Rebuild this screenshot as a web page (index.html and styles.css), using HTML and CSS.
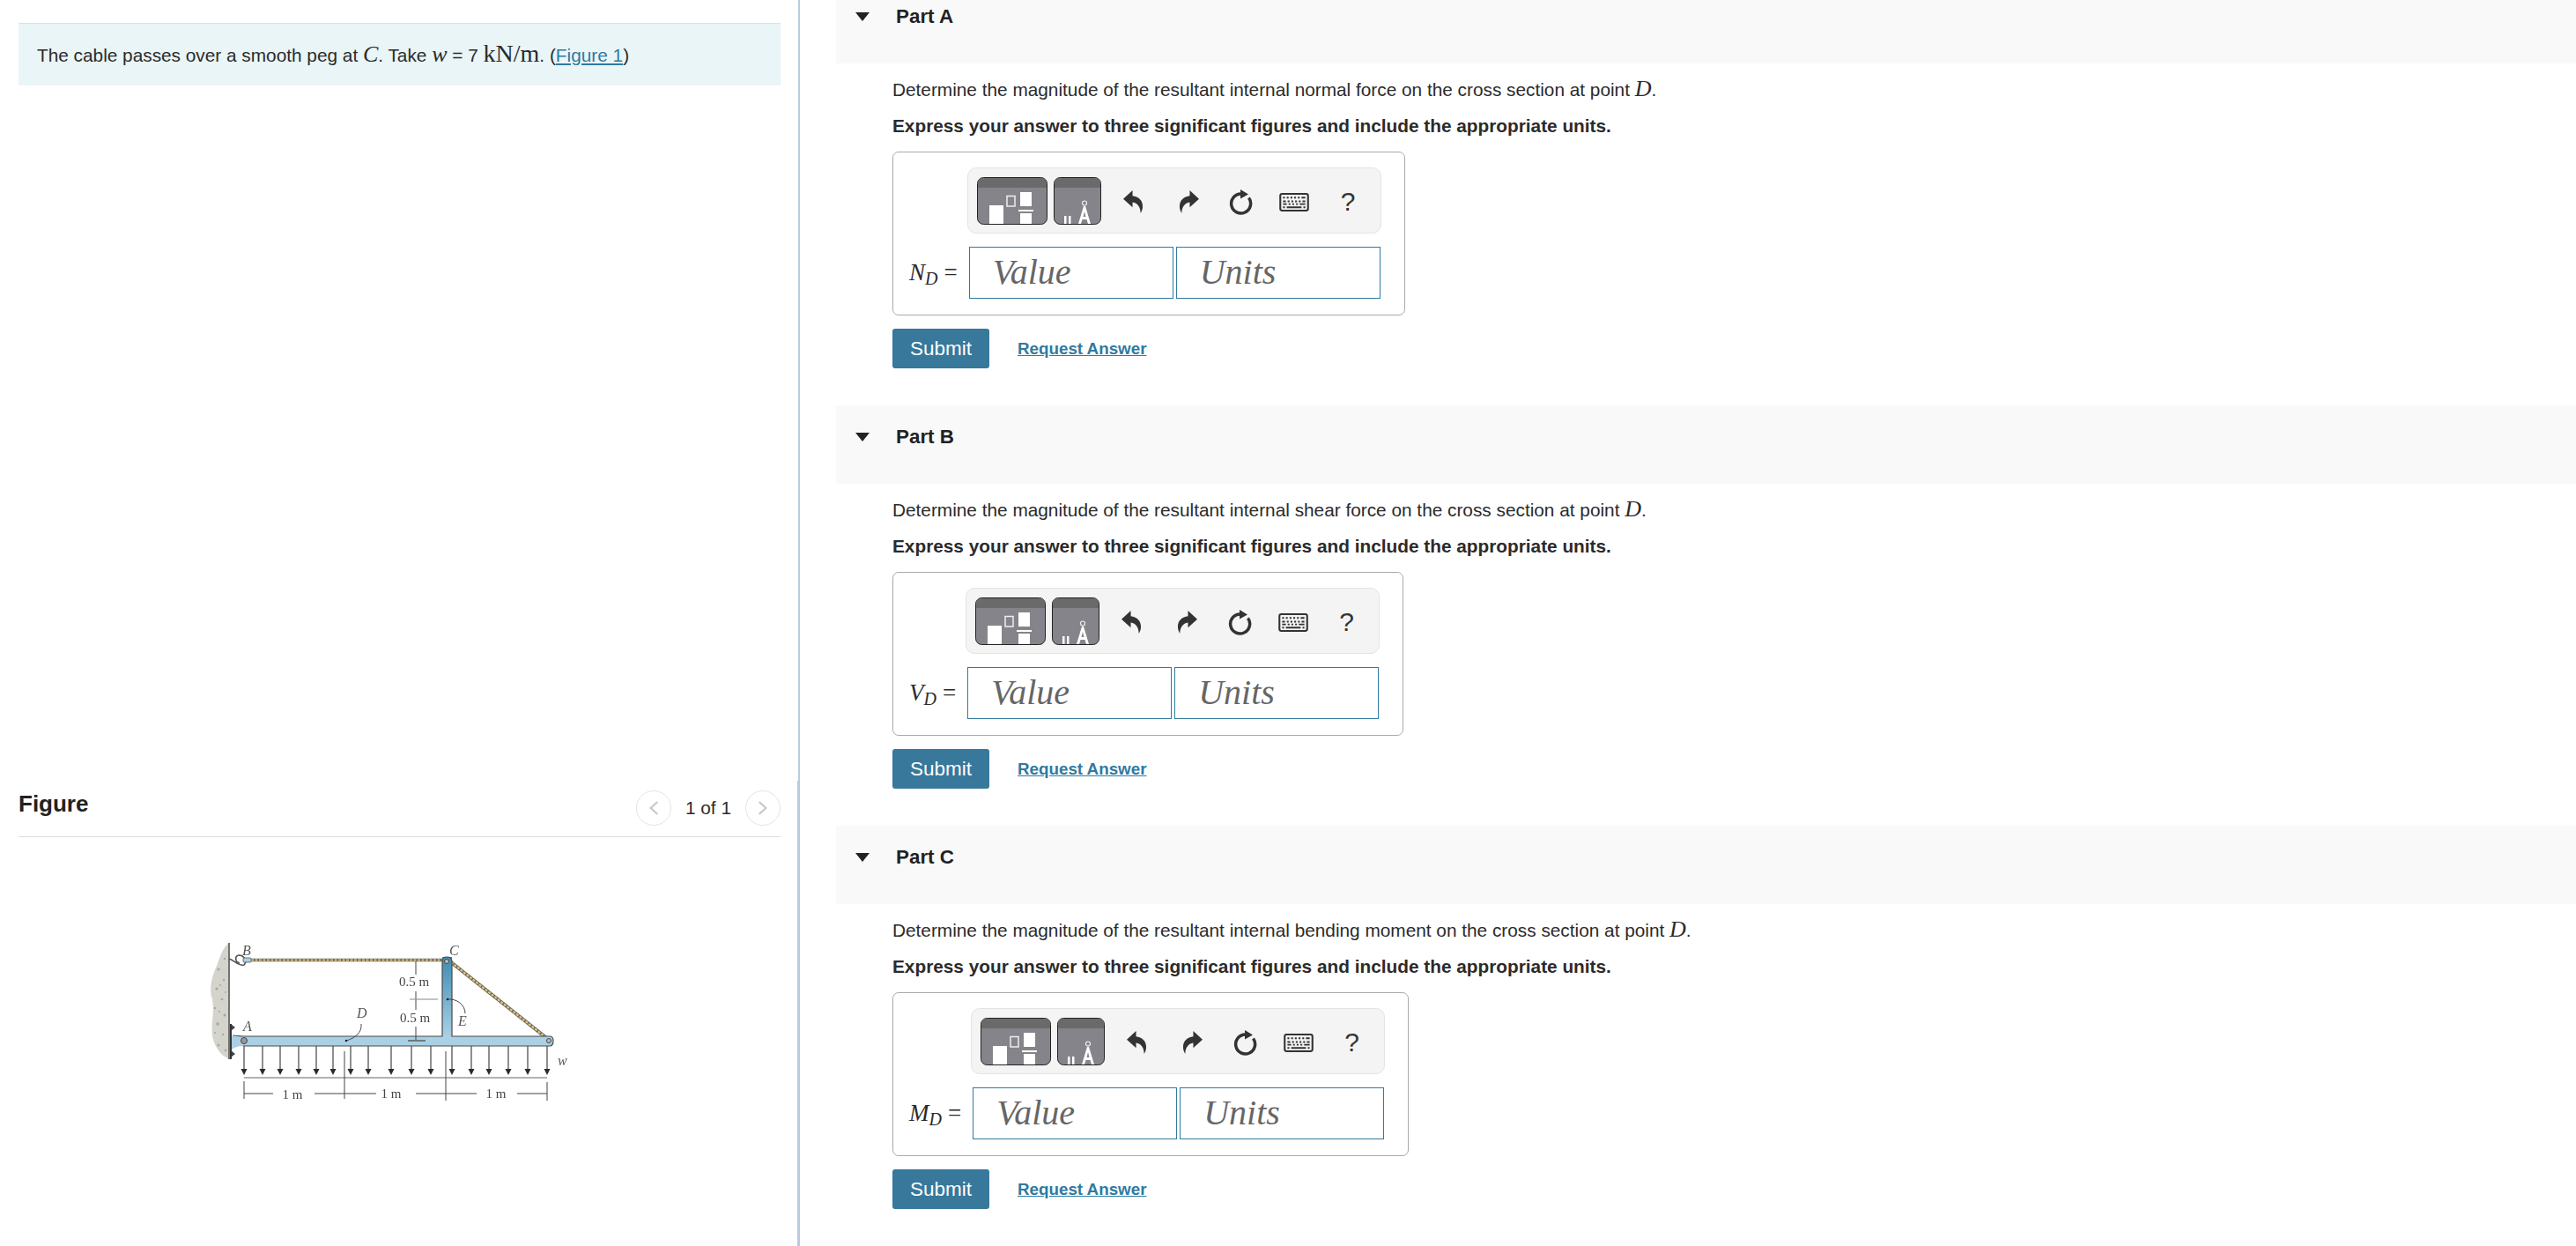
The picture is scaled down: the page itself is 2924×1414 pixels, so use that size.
FILE: index.html
```html
<!DOCTYPE html>
<html lang="en">

<head>
    <meta charset="UTF-8">
    <title>Resultant Internal Loadings</title>
    <link rel="stylesheet" href="styles.css">
</head>

<body>
    <svg class="defs" width="0" height="0">
        <defs>
            <symbol id="ico-undo" viewBox="0 0 24 27">
                <path d="M0 10 L11 0 V6.500 C18 7 23 12 23 19 C23 22 22 25 20.500 27 C20.500 20 17 14.500 11 14 V20 Z" />
            </symbol>
            <symbol id="ico-reload" viewBox="0 0 28 29">
                <path class="ico-line" d="M14.500 5 A11 11 0 1 0 23.500 9.500" />
                <path d="M14 0 L23 5.500 L14 10.500 Z" />
            </symbol>
            <symbol id="ico-keys" viewBox="0 0 32 20">
                <rect class="ico-line-thin" x="1" y="1" width="30" height="18" rx="2" />
                <path class="ico-dots" d="M4 5h2M8 5h2M12 5h2M16 5h2M20 5h2M24 5h4M4 9h3M9 9h2M13 9h2M17 9h2M21 9h2M25 9h3M4 12h4M10 12h2M14 12h2M18 12h2M22 12h6M4 15.500h2M8 15.500h16M26 15.500h2" />
            </symbol>
            <symbol id="btn-templates" viewBox="0 0 80 54">
                <rect class="btn-body" x="0.500" y="0.500" width="79" height="53" rx="7" />
                <path class="btn-top" d="M1 12 V7 Q1 1 7 1 H73 Q79 1 79 7 V12 Z" />
                <path class="btn-white" d="M14 32 H30 V53 H14 Z M49 17 H62 V33 H49 Z M47 37 H64 V39 H47 Z M49 41 H62 V53 H49 Z" />
                <rect class="btn-outline" x="34" y="21.500" width="9" height="11.500" />
            </symbol>
            <symbol id="btn-units" viewBox="0 0 54 54">
                <rect class="btn-body" x="0.500" y="0.500" width="53" height="53" rx="7" />
                <path class="btn-top" d="M1 12 V7 Q1 1 7 1 H47 Q53 1 53 7 V12 Z" />
                <path class="btn-white" d="M12 44 H14.500 V53 H12 Z M17 44 H19.500 V53 H17 Z M34 33 L36 33 L42 53 H39 L37.500 48 H32.500 L31 53 H28 Z M33.500 45 H36.500 L35 39 Z" />
                <circle class="btn-ring" cx="35" cy="29.500" r="2.500" />
            </symbol>
        </defs>
    </svg>

    <div class="layout">
        <div class="left-pane">
            <div class="intro">
                The cable passes over a smooth peg at <span class="math">C</span>. Take <span class="math">w</span> = 7
                <span class="math-roman">kN/m</span>. (<a href="#fig">Figure 1</a>)
            </div>

            <div class="figure-head" id="fig">
                <h2>Figure</h2>
                <div class="pager">
                    <span class="pager-btn"><svg viewBox="0 0 14 20" width="12" height="18"><path d="M12 2 L3 10 L12 18" /></svg></span>
                    <span class="pager-text">1 of 1</span>
                    <span class="pager-btn"><svg viewBox="0 0 14 20" width="12" height="18"><path d="M2 2 L11 10 L2 18" /></svg></span>
                </div>
            </div>

            <svg class="diagram" viewBox="0 0 480 220" width="480" height="220">
                <defs>
                    <linearGradient id="post" x1="0" y1="0" x2="0" y2="1">
                        <stop offset="0" stop-color="#3d8db4" />
                        <stop offset="1" stop-color="#a9d0e4" />
                    </linearGradient>
                </defs>
                <!-- wall -->
                <path d="M60 20 C52 26 50 36 46 46 C40 60 37 72 41 84 C44 100 38 116 42 130 C46 142 52 148 60 152 Z" fill="#d4d4cd" />
                <g fill="#a4a8a8">
                    <circle cx="48" cy="50" r="1.500" /><circle cx="54" cy="62" r="1.200" /><circle cx="46" cy="72" r="1.600" />
                    <circle cx="52" cy="84" r="1.300" /><circle cx="44" cy="94" r="1.200" /><circle cx="55" cy="102" r="1.500" />
                    <circle cx="47" cy="112" r="1.800" /><circle cx="53" cy="124" r="1.200" /><circle cx="48" cy="136" r="1.500" />
                    <circle cx="55" cy="38" r="1.200" /><circle cx="56" cy="142" r="1.300" /><circle cx="50" cy="68" r="1" />
                    <circle cx="56" cy="76" r="1" /><circle cx="49" cy="98" r="1.100" /><circle cx="44" cy="122" r="1" />
                </g>
                <line x1="60" y1="20" x2="60" y2="152" stroke="#555" stroke-width="1.600" />
                <!-- bolts and bracket -->
                <path d="M62 112 L67 116 L62 120 Z M62 142 L67 146 L62 150 Z" fill="#444" />
                <path d="M61 112 H63 V152 H61 Z" fill="#333" />
                <!-- cables -->
                <line x1="85" y1="39.500" x2="304" y2="39.500" stroke="#6b6656" stroke-width="3.400" />
                <line x1="85" y1="39.500" x2="304" y2="39.500" stroke="#e0c688" stroke-width="1.800" stroke-dasharray="3 1.500" />
                <line x1="312" y1="42" x2="423" y2="130" stroke="#6b6656" stroke-width="4" />
                <line x1="312" y1="42" x2="423" y2="130" stroke="#e0c688" stroke-width="2.200" stroke-dasharray="3 1.500" />
                <!-- hook at B -->
                <path d="M60 38 C66 40 72 47 77 45 C81 41 77 34 71 34 C66 35 67 42 72 43" fill="none" stroke="#555" stroke-width="1.700" />
                <rect x="76" y="37" width="9" height="5" rx="1" fill="#a9d0e4" stroke="#555" stroke-width="0.800" />
                <!-- member -->
                <path d="M63 126 H302 V41 Q302 36 307 36 Q313 36 313 41 V126 H424 Q428 126 428 131 Q428 137 424 137 H76 C70 137 66 139 63 141 Z" fill="#a9d0e4" />
                <path d="M302 36 H313 V126 H302 Z" fill="url(#post)" />
                <path d="M64 125 C68 125 72 126 76 126 H302 V41 Q302 36 307 36 Q313 36 313 41 V126 H424 M76 137 H424 Q428 137 428 131 Q428 126 424 126" fill="none" stroke="#4a4a4a" stroke-width="1.200" />
                <circle cx="77" cy="131" r="3.500" fill="#999" stroke="#444" />
                <circle cx="307" cy="41" r="2.500" fill="#bbb" stroke="#444" />
                <circle cx="423" cy="131" r="2.500" fill="#bbb" stroke="#444" />
                <!-- load arrows -->
                <g stroke="#444" stroke-width="1.200">
                    <line x1="77" y1="137" x2="77" y2="164" /><line x1="98" y1="137" x2="98" y2="164" />
                    <line x1="118" y1="137" x2="118" y2="164" /><line x1="139" y1="137" x2="139" y2="164" />
                    <line x1="159" y1="137" x2="159" y2="164" /><line x1="178" y1="137" x2="178" y2="164" />
                    <line x1="198" y1="137" x2="198" y2="164" /><line x1="218" y1="137" x2="218" y2="164" />
                    <line x1="244" y1="137" x2="244" y2="164" /><line x1="267" y1="137" x2="267" y2="164" />
                    <line x1="289" y1="137" x2="289" y2="164" /><line x1="313" y1="137" x2="313" y2="164" />
                    <line x1="335" y1="137" x2="335" y2="164" /><line x1="355" y1="137" x2="355" y2="164" />
                    <line x1="377" y1="137" x2="377" y2="164" /><line x1="399" y1="137" x2="399" y2="164" />
                    <line x1="421" y1="137" x2="421" y2="164" />
                    <line x1="77" y1="173" x2="421" y2="173" stroke="#666" />
                </g>
                <g fill="#2a2a2a">
                    <path d="M73.500 163h7l-3.500 7z" /><path d="M94.500 163h7l-3.500 7z" /><path d="M114.500 163h7l-3.500 7z" /><path d="M135.500 163h7l-3.500 7z" />
                    <path d="M155.500 163h7l-3.500 7z" /><path d="M174.500 163h7l-3.500 7z" /><path d="M194.500 163h7l-3.500 7z" /><path d="M214.500 163h7l-3.500 7z" />
                    <path d="M240.500 163h7l-3.500 7z" /><path d="M263.500 163h7l-3.500 7z" /><path d="M285.500 163h7l-3.500 7z" /><path d="M309.500 163h7l-3.500 7z" />
                    <path d="M331.500 163h7l-3.500 7z" /><path d="M351.500 163h7l-3.500 7z" /><path d="M373.500 163h7l-3.500 7z" /><path d="M395.500 163h7l-3.500 7z" />
                    <path d="M417.500 163h7l-3.500 7z" />
                </g>
                <!-- dimensions -->
                <g stroke="#444" stroke-width="1" fill="none">
                    <path d="M77 177 V197 M191 143 V197 M306 143 V199 M421 178 V199" />
                    <path d="M77 191 H110 M157 191 H191 M191 191 H227 M272 191 H306 M306 191 H341 M387 191 H421" />
                    <path d="M272 41 V56 M272 75 V96 M272 115 V130" />
                    <path d="M263 131 H283" stroke-width="1.200" />
                    <path d="M265 84 H297" stroke="#999" stroke-width="1.200" />
                    <path d="M193 131 C203 128 211 122 210 112" />
                    <path d="M308 84 C318 83 328 90 328 100" />
                </g>
                <circle cx="193" cy="131" r="1.300" fill="#222" />
                <circle cx="308" cy="84" r="1.300" fill="#222" />
                <g class="diagram-text">
                    <text x="132" y="197" text-anchor="middle">1 m</text>
                    <text x="244" y="196" text-anchor="middle">1 m</text>
                    <text x="363" y="196" text-anchor="middle">1 m</text>
                    <text x="270" y="69" text-anchor="middle">0.5 m</text>
                    <text x="271" y="110" text-anchor="middle">0.5 m</text>
                </g>
                <g class="diagram-text diagram-italic">
                    <text x="75" y="34">B</text>
                    <text x="310" y="34">C</text>
                    <text x="76" y="120">A</text>
                    <text x="205" y="105">D</text>
                    <text x="320" y="114">E</text>
                    <text x="433" y="159">w</text>
                </g>
            </svg>
        </div>

        <div class="right-pane">
            <section class="part">
                <div class="part-head"><span class="caret"></span><h3>Part A</h3></div>
                <div class="part-body">
                    <p class="question">Determine the magnitude of the resultant internal normal force on the cross section at point <span class="math">D</span>.</p>
                    <p class="instruction">Express your answer to three significant figures and include the appropriate units.</p>
                    <div class="answer-box">
                        <div class="toolbar">
                            <svg class="tool-btn-wide"><use href="#btn-templates" /></svg>
                            <svg class="tool-btn"><use href="#btn-units" /></svg>
                            <span class="tool"><svg class="ico-arrow"><use href="#ico-undo" /></svg></span>
                            <span class="tool"><svg class="ico-arrow ico-flip"><use href="#ico-undo" /></svg></span>
                            <span class="tool"><svg class="ico-reload"><use href="#ico-reload" /></svg></span>
                            <span class="tool"><svg class="ico-keys"><use href="#ico-keys" /></svg></span>
                            <span class="tool tool-help">?</span>
                        </div>
                        <div class="answer-label"><i>N</i><sub>D</sub>=</div>
                        <div class="answer-fields">
                            <span class="field">Value</span>
                            <span class="field">Units</span>
                        </div>
                    </div>
                    <div class="actions">
                        <button class="submit">Submit</button>
                        <a class="request" href="#">Request Answer</a>
                    </div>
                </div>
            </section>

            <section class="part">
                <div class="part-head"><span class="caret"></span><h3>Part B</h3></div>
                <div class="part-body">
                    <p class="question">Determine the magnitude of the resultant internal shear force on the cross section at point <span class="math">D</span>.</p>
                    <p class="instruction">Express your answer to three significant figures and include the appropriate units.</p>
                    <div class="answer-box">
                        <div class="toolbar">
                            <svg class="tool-btn-wide"><use href="#btn-templates" /></svg>
                            <svg class="tool-btn"><use href="#btn-units" /></svg>
                            <span class="tool"><svg class="ico-arrow"><use href="#ico-undo" /></svg></span>
                            <span class="tool"><svg class="ico-arrow ico-flip"><use href="#ico-undo" /></svg></span>
                            <span class="tool"><svg class="ico-reload"><use href="#ico-reload" /></svg></span>
                            <span class="tool"><svg class="ico-keys"><use href="#ico-keys" /></svg></span>
                            <span class="tool tool-help">?</span>
                        </div>
                        <div class="answer-label"><i>V</i><sub>D</sub>=</div>
                        <div class="answer-fields">
                            <span class="field">Value</span>
                            <span class="field">Units</span>
                        </div>
                    </div>
                    <div class="actions">
                        <button class="submit">Submit</button>
                        <a class="request" href="#">Request Answer</a>
                    </div>
                </div>
            </section>

            <section class="part">
                <div class="part-head"><span class="caret"></span><h3>Part C</h3></div>
                <div class="part-body">
                    <p class="question">Determine the magnitude of the resultant internal bending moment on the cross section at point <span class="math">D</span>.</p>
                    <p class="instruction">Express your answer to three significant figures and include the appropriate units.</p>
                    <div class="answer-box">
                        <div class="toolbar">
                            <svg class="tool-btn-wide"><use href="#btn-templates" /></svg>
                            <svg class="tool-btn"><use href="#btn-units" /></svg>
                            <span class="tool"><svg class="ico-arrow"><use href="#ico-undo" /></svg></span>
                            <span class="tool"><svg class="ico-arrow ico-flip"><use href="#ico-undo" /></svg></span>
                            <span class="tool"><svg class="ico-reload"><use href="#ico-reload" /></svg></span>
                            <span class="tool"><svg class="ico-keys"><use href="#ico-keys" /></svg></span>
                            <span class="tool tool-help">?</span>
                        </div>
                        <div class="answer-label"><i>M</i><sub>D</sub>=</div>
                        <div class="answer-fields">
                            <span class="field">Value</span>
                            <span class="field">Units</span>
                        </div>
                    </div>
                    <div class="actions">
                        <button class="submit">Submit</button>
                        <a class="request" href="#">Request Answer</a>
                    </div>
                </div>
            </section>
        </div>
    </div>
</body>

</html>
```

FILE: styles.css
```css
html,
body {
    margin: 0;
    height: 100%;
    overflow: hidden;
}

body {
    font-family: "Liberation Sans", Arial, sans-serif;
    font-size: 20.800px;
    color: #2b2b2b;
    background-color: #fff;
}

.defs {
    display: block;
    height: 0;
}

.layout {
    display: flex;
    height: 1414px;
}

.math {
    font-family: "Liberation Serif", serif;
    font-style: italic;
    font-size: 26px;
}

.math-roman {
    font-family: "Liberation Serif", serif;
    font-size: 28px;
}

/* left pane */
.left-pane {
    position: relative;
    width: 908px;
    flex: none;
    box-sizing: border-box;
    padding: 26px 20px 0 21px;
    border-right: 2px solid #b9cbdd;
}

/* the divider gets one pixel wider below the figure header */
.left-pane::after {
    content: "";
    position: absolute;
    top: 886px;
    bottom: 0;
    right: 0;
    width: 1px;
    background-color: #b9cbdd;
}

.intro {
    height: 71px;
    box-sizing: border-box;
    padding: 0 21px;
    line-height: 68px;
    background-color: #e9f5f7;
    border-top: 1px solid #dcdfe1;
}

.intro a {
    color: #2f7a9f;
}

.figure-head {
    display: flex;
    justify-content: space-between;
    align-items: flex-start;
    height: 52px;
    margin-top: 800px;
    border-bottom: 1px solid #dcdfe1;
}

.figure-head h2 {
    margin: 0;
    font-size: 26px;
    line-height: 30px;
    color: #222;
}

.pager {
    display: flex;
    align-items: center;
    gap: 16px;
}

.pager-btn {
    display: flex;
    align-items: center;
    justify-content: center;
    width: 38px;
    height: 38px;
    border: 1px solid #e4e4e4;
    border-radius: 50%;
}

.pager-btn path {
    fill: none;
    stroke: #c8c8c8;
    stroke-width: 2.500;
}

.diagram {
    display: block;
    margin: 100px 0 0 179px;
    filter: blur(0.5px);
}

.diagram-text text {
    font-family: "Liberation Serif", serif;
    font-size: 15px;
    fill: #444;
}

.diagram-italic text {
    font-style: italic;
    font-size: 16px;
    fill: #555;
}

/* right pane */
.right-pane {
    flex: 1;
    min-width: 0;
    margin-top: -17px;
    padding-left: 41px;
}

.part {
    height: 477px;
}

.part-head {
    display: flex;
    align-items: center;
    height: 89px;
    padding: 0 0 17px 22px;
    box-sizing: border-box;
    background-color: #f9f9f9;
}

.caret {
    width: 0;
    height: 0;
    margin-right: 30px;
    border-left: 8px solid transparent;
    border-right: 8px solid transparent;
    border-top: 10px solid #222;
}

.part-head h3 {
    margin: 0;
    font-size: 22.400px;
    color: #222;
}

.part-body {
    padding-left: 64px;
}

.question {
    margin: 0;
    padding-top: 14px;
    line-height: 30px;
}

.instruction {
    margin: 11px 0 0;
    line-height: 30px;
    font-weight: bold;
}

.answer-box {
    display: inline-grid;
    grid-template-columns: auto auto;
    row-gap: 15px;
    margin-top: 14px;
    padding: 17px 26px 18px 18px;
    border: 1px solid #aaa;
    border-radius: 7px;
}

.toolbar {
    grid-column: 2;
    display: flex;
    align-items: center;
    width: 470px;
    height: 75px;
    box-sizing: border-box;
    margin-left: -2px;
    padding-left: 10px;
    background-color: #f4f4f4;
    border: 1px solid #e4e4e4;
    border-radius: 10px;
}

.tool-btn-wide {
    width: 80px;
    height: 54px;
    margin-right: 7px;
}

.tool-btn {
    width: 54px;
    height: 54px;
    margin-right: 6px;
}

.tool {
    display: flex;
    align-items: center;
    justify-content: center;
    width: 61px;
    height: 54px;
    padding-top: 3px;
}

.tool svg {
    fill: #333;
}

.ico-arrow {
    width: 23px;
    height: 26px;
}

.ico-flip {
    margin-left: 4px;
    transform: scaleX(-1);
}

.ico-reload {
    width: 28px;
    height: 29px;
}

.ico-keys {
    width: 34px;
    height: 21px;
}

.ico-line {
    fill: none;
    stroke: #333;
    stroke-width: 3.500;
}

.ico-line-thin {
    fill: #f4f4f4;
    stroke: #333;
    stroke-width: 2;
}

.ico-dots {
    fill: none;
    stroke: #333;
    stroke-width: 1.800;
}

.btn-body {
    fill: #85848a;
    stroke: #222;
}

.btn-top {
    fill: #6a6a6a;
}

.btn-white {
    fill: #fff;
}

.btn-outline {
    fill: none;
    stroke: #eee;
    stroke-width: 1.500;
}

.btn-ring {
    fill: none;
    stroke: #eee;
    stroke-width: 1.200;
}

.tool-help {
    font-size: 30px;
    color: #333;
}

.answer-label {
    display: flex;
    align-items: center;
    padding-right: 13px;
    font-family: "Liberation Serif", serif;
    font-size: 27px;
    white-space: pre;
}

.answer-label sub {
    align-self: flex-end;
    margin-bottom: 13px;
    margin-right: 7px;
    font-size: 20px;
    font-style: italic;
    line-height: 1;
}

.answer-fields {
    display: flex;
    gap: 3px;
}

.field {
    width: 232px;
    height: 59px;
    box-sizing: border-box;
    padding-left: 26px;
    font-family: "Liberation Serif", serif;
    font-style: italic;
    font-size: 40px;
    line-height: 56px;
    color: #666;
    border: 1px solid #2f7a9f;
}

.actions {
    display: flex;
    align-items: center;
    gap: 32px;
    margin-top: 15px;
}

.submit {
    width: 110px;
    height: 45px;
    font-family: inherit;
    font-size: 22.500px;
    color: #fff;
    background-color: #37789b;
    border: none;
    border-radius: 3px;
}

.request {
    font-size: 18.800px;
    font-weight: bold;
    color: #2f7a9f;
}
```
